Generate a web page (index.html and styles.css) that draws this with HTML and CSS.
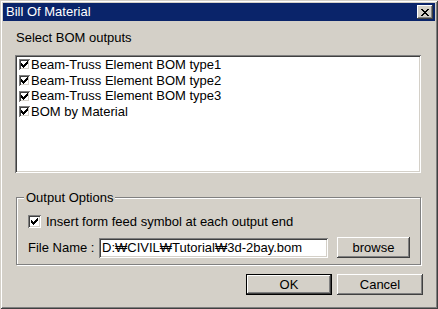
FILE: index.html
```html
<!DOCTYPE html>
<html lang="ko">
<head>
  <meta charset="UTF-8">
  <title>Bill Of Material</title>
  <link rel="stylesheet" href="styles.css">
</head>
<body>
  <div class="window">
    <div class="titlebar">
      <span class="title">Bill Of Material</span>
      <button type="button" class="close" aria-label="Close">
        <svg width="8" height="7" viewBox="0 0 8 7" shape-rendering="crispEdges">
          <path d="M0 0h2v1h1v1h2v-1h1v-1h2v1h-1v1h-1v1h-1v1h1v1h1v1h1v1h-2v-1h-1v-1h-2v1h-1v1h-2v-1h1v-1h1v-1h1v-1h-1v-1h-1v-1h-1z" fill="#000"/>
        </svg>
      </button>
    </div>

    <div class="content">
      <div class="label">Select BOM outputs</div>

      <ul class="list">
        <li><span class="check small"><svg width="7" height="7" viewBox="0 0 7 7" shape-rendering="crispEdges"><path d="M0 2h1v1h1v1h1v-1h1v-1h1v-1h1v-1h1v3h-1v1h-1v1h-1v1h-1v1h-1v-1h-1v-1h-1z"/></svg></span>Beam-Truss Element BOM type1</li>
        <li><span class="check small"><svg width="7" height="7" viewBox="0 0 7 7" shape-rendering="crispEdges"><path d="M0 2h1v1h1v1h1v-1h1v-1h1v-1h1v-1h1v3h-1v1h-1v1h-1v1h-1v1h-1v-1h-1v-1h-1z"/></svg></span>Beam-Truss Element BOM type2</li>
        <li><span class="check small"><svg width="7" height="7" viewBox="0 0 7 7" shape-rendering="crispEdges"><path d="M0 2h1v1h1v1h1v-1h1v-1h1v-1h1v-1h1v3h-1v1h-1v1h-1v1h-1v1h-1v-1h-1v-1h-1z"/></svg></span>Beam-Truss Element BOM type3</li>
        <li><span class="check small"><svg width="7" height="7" viewBox="0 0 7 7" shape-rendering="crispEdges"><path d="M0 2h1v1h1v1h1v-1h1v-1h1v-1h1v-1h1v3h-1v1h-1v1h-1v1h-1v1h-1v-1h-1v-1h-1z"/></svg></span>BOM by Material</li>
      </ul>

      <div class="group">
        <span class="group-title">Output Options</span>
        <div class="option">
          <span class="check"><svg width="7" height="7" viewBox="0 0 7 7" shape-rendering="crispEdges"><path d="M0 2h1v1h1v1h1v-1h1v-1h1v-1h1v-1h1v3h-1v1h-1v1h-1v1h-1v1h-1v-1h-1v-1h-1z"/></svg></span>
          Insert form feed symbol at each output end
        </div>
        <div class="file-row">
          <span class="file-label">File Name :</span>
          <div class="textbox">D:₩CIVIL₩Tutorial₩3d-2bay.bom</div>
          <button type="button" class="btn browse">browse</button>
        </div>
      </div>

      <div class="actions">
        <button type="button" class="btn default">OK</button>
        <button type="button" class="btn">Cancel</button>
      </div>
    </div>
  </div>
</body>
</html>
```

FILE: styles.css
```css
body {
  margin: 0;
  background-color: #d4d0c8;
  font-family: "Liberation Sans", Arial, "DejaVu Sans", sans-serif;
  font-size: 13px;
  color: #000;
}
.window {
  width: 438px;
  height: 309px;
  box-sizing: border-box;
  padding: 3px;
  background-color: #d4d0c8;
  box-shadow: inset 1px 1px #d4d0c8, inset -1px -1px #404040,
              inset 2px 2px #fff, inset -2px -2px #808080;
}
.titlebar {
  height: 18px;
  display: flex;
  align-items: center;
  justify-content: space-between;
  padding: 0 2px 0 3px;
  background-color: #0a246a;
  color: #fff;
}
.title {
  line-height: 18px;
}
.close {
  width: 16px;
  height: 14px;
  padding: 0;
  border: none;
  display: flex;
  align-items: center;
  justify-content: center;
  background-color: #d4d0c8;
  box-shadow: inset -1px -1px #404040, inset 1px 1px #fff,
              inset -2px -2px #808080, inset 2px 2px #d4d0c8;
}
.content {
  padding: 0 14px 0 12px;
}
.label {
  margin-top: 9px;
  line-height: 15px;
  padding-left: 1px;
}
.list {
  list-style: none;
  margin: 10px 0 0;
  padding: 2px 0 0 4px;
  height: 118px;
  box-sizing: border-box;
  background-color: #fff;
  box-shadow: inset 1px 1px #808080, inset -1px -1px #fff,
              inset 2px 2px #404040, inset -2px -2px #d4d0c8;
}
.list li {
  display: flex;
  align-items: center;
  height: 15.7px;
  line-height: 15.7px;
  white-space: nowrap;
}
.check {
  width: 13px;
  height: 13px;
  box-sizing: border-box;
  display: inline-flex;
  align-items: center;
  justify-content: center;
  flex-shrink: 0;
  background-color: #fff;
  box-shadow: inset 1px 1px #808080, inset -1px -1px #fff,
              inset 2px 2px #404040, inset -2px -2px #d4d0c8;
  margin-right: 5px;
}
.check.small {
  width: 11px;
  height: 11px;
  margin-right: 1px;
}
.check svg {
  fill: #000;
}
.group {
  position: relative;
  margin: 24px 0 0 1px;
  height: 68px;
  box-sizing: border-box;
  padding: 17px 0 0 11px;
  border: 1px solid #808080;
  box-shadow: inset 1px 1px #fff, 1px 1px #fff;
}
.group-title {
  position: absolute;
  top: -8px;
  left: 7px;
  padding: 0 2px;
  line-height: 15px;
  background-color: #d4d0c8;
}
.option {
  display: flex;
  align-items: center;
  height: 13px;
  white-space: nowrap;
}
.file-row {
  display: flex;
  align-items: center;
  margin-top: 9px;
  height: 21px;
}
.file-label {
  width: 71px;
  flex-shrink: 0;
}
.textbox {
  width: 229px;
  height: 20px;
  box-sizing: border-box;
  padding: 0 3px;
  line-height: 20px;
  background-color: #fff;
  white-space: nowrap;
  overflow: hidden;
  box-shadow: inset 1px 1px #808080, inset -1px -1px #fff,
              inset 2px 2px #404040, inset -2px -2px #d4d0c8;
}
.btn {
  height: 21px;
  padding: 0;
  border: none;
  font-family: inherit;
  font-size: 13px;
  color: #000;
  background-color: #d4d0c8;
  box-shadow: inset -1px -1px #404040, inset 1px 1px #fff,
              inset -2px -2px #808080, inset 2px 2px #d4d0c8;
}
.browse {
  width: 73px;
  margin-left: 9px;
}
.actions {
  display: flex;
  justify-content: flex-end;
  gap: 5px;
  margin: 9px -2px 0 0;
}
.actions .btn {
  width: 86px;
}
.btn.default {
  border: 1px solid #000;
  box-shadow: inset -1px -1px #404040, inset 1px 1px #fff,
              inset -2px -2px #808080;
}
```
